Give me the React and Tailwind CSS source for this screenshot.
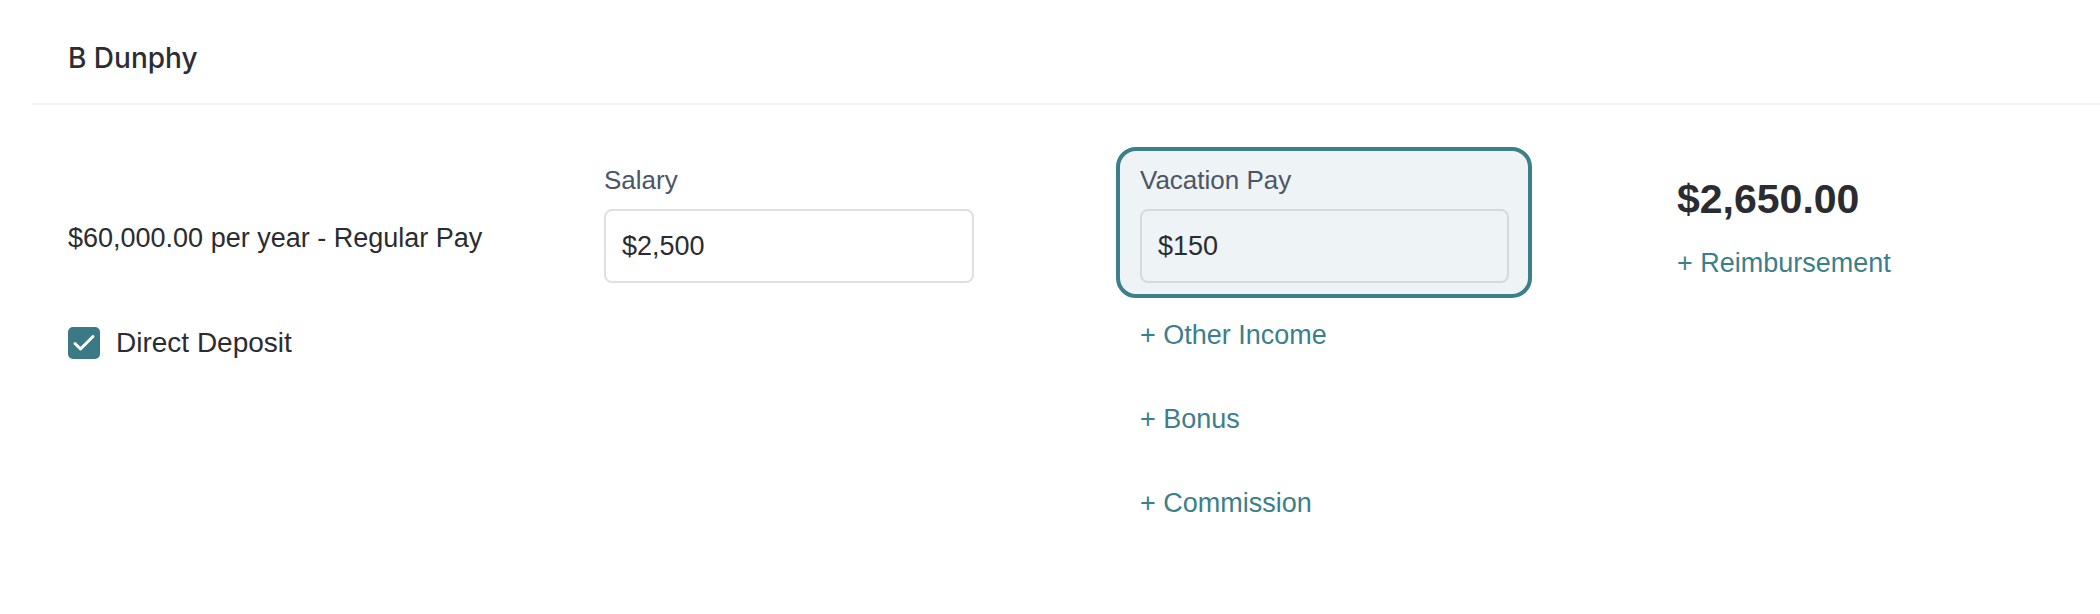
import React from 'react';

const body = "font-['Liberation_Sans',Arial,sans-serif]";

const CheckBox = () => (
  <span className="w-[32px] h-[32px] rounded-[5px] bg-[#3b7984] flex items-center justify-center shrink-0">
    <svg width="32" height="32" viewBox="0 0 32 32" fill="none">
      <path d="M7 16.5L12.5 22L25 9.5" stroke="#ffffff" strokeWidth="3" strokeLinecap="round" strokeLinejoin="round" />
    </svg>
  </span>
);

const AddLink = ({ label, className = '' }) => (
  <button className={`text-left text-[27px] leading-[27px] text-[#3b7f8a] ${className}`}>+ {label}</button>
);

const App = () => {
  return (
    <div className={`min-h-[614px] bg-white pl-[32px] ${body}`}>
      {/* Header */}
      <div className="pl-[36px] pt-[44px] pb-[31px]">
        <h2 className="font-['Inter',sans-serif] font-medium text-[28px] leading-[28px] text-[#2b2e33]">B Dunphy</h2>
      </div>
      <div className="h-[2px] bg-[#f1f2f3]" />

      {/* Pay row */}
      <div className="grid grid-cols-[536px_536px_537px_1fr] pl-[36px]">
        {/* Employee pay info */}
        <div className="pt-[120px] flex flex-col">
          <p className="text-[27px] leading-[27px] text-[#2a2c31]">$60,000.00 per year - Regular Pay</p>
          <label className="mt-[75px] flex items-center gap-[16px]">
            <CheckBox />
            <span className="text-[28px] leading-[28px] text-[#2a2c31]">Direct Deposit</span>
          </label>
        </div>

        {/* Salary */}
        <div className="pt-[62px] flex flex-col">
          <span className="text-[26px] leading-[26px] text-[#4d5566]">Salary</span>
          <div className="mt-[16px] w-[370px] h-[74px] rounded-[8px] border-2 border-[#e0e0e0] bg-white flex items-center px-[16px]">
            <span className="text-[27px] leading-[27px] text-[#2a2c31]">$2,500</span>
          </div>
        </div>

        {/* Vacation pay (focused) + extra income */}
        <div className="flex flex-col">
          <div className="mt-[42px] -ml-[24px] w-[416px] rounded-[20px] border-4 border-[#3b7f8a] bg-[#eef4f6] pt-[16px] pb-[11px] pl-[20px] pr-[19px] flex flex-col">
            <span className="text-[26px] leading-[26px] text-[#4d5566]">Vacation Pay</span>
            <div className="mt-[16px] w-[369px] h-[74px] rounded-[8px] border-2 border-[#d6dadd] bg-[#eef3f6] flex items-center px-[16px]">
              <span className="text-[27px] leading-[27px] text-[#2a2c31]">$150</span>
            </div>
          </div>
          <div className="flex flex-col gap-[57px] mt-[24px]">
            <AddLink label="Other Income" />
            <AddLink label="Bonus" />
            <AddLink label="Commission" />
          </div>
        </div>

        {/* Total */}
        <div className="pt-[74px] flex flex-col">
          <span className="text-[41px] leading-[40px] font-bold text-[#2a2c31]">$2,650.00</span>
          <AddLink label="Reimbursement" className="mt-[31px]" />
        </div>
      </div>
    </div>
  );
};

export default App;
